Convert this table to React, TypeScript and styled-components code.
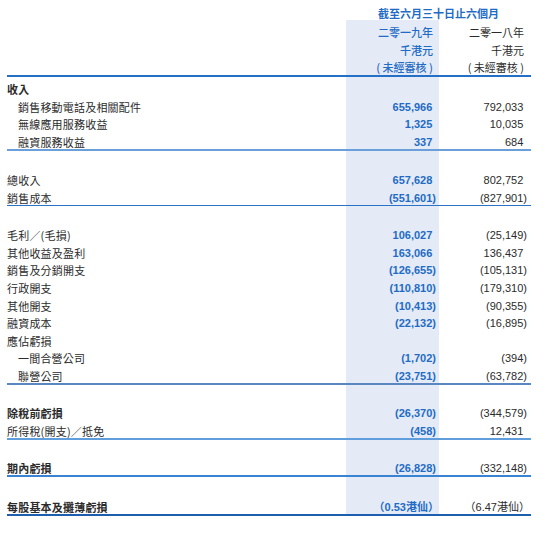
import React from "react";
import styled, { createGlobalStyle } from "styled-components";

const GlobalStyle = createGlobalStyle`
  html, body { margin: 0; padding: 0; background: #ffffff; }
  body { font-family: "Noto Sans CJK TC", "Liberation Sans", sans-serif; color: #2b2b2b; }
`;

const ROW = 17.6;
const BLUE = "#1f6bc5";
const SHADE = "#e5ebf6";
const CJK = `"Noto Sans CJK TC", "Noto Sans CJK SC", sans-serif`;
const NUM = `"Liberation Sans", Arial, "Noto Sans CJK TC", sans-serif`;

const Page = styled.div`
  padding-left: 7px;
  width: 524px;
`;

const Grid = styled.div`
  display: grid;
  grid-template-columns: 339px 93px 92px;
`;

const TitleBar = styled(Grid)`
  height: 20px;
  padding-top: 6px;
  box-sizing: border-box;
`;

const Title = styled.div`
  grid-column: 2 / 4;
  text-align: center;
  font-family: ${CJK};
  font-size: 11px;
  line-height: 14px;
  font-weight: 700;
  color: ${BLUE};
`;

const Table = styled.div`
  background: linear-gradient(
    90deg,
    transparent 339px,
    ${SHADE} 339px,
    ${SHADE} 432px,
    transparent 432px
  );
`;

const Head = styled.div`
  padding-top: 4px;
  border-bottom: 2px solid #2470c6;
`;

const HeadRow = styled(Grid)<{ $h: number }>`
  height: ${(p) => p.$h}px;
  line-height: ${(p) => p.$h}px;
`;

const HeadCell = styled.div<{ $current?: boolean }>`
  text-align: right;
  font-family: ${CJK};
  font-size: 11px;
  font-weight: ${(p) => (p.$current ? 500 : 400)};
  color: ${(p) => (p.$current ? BLUE : "#2b2b2b")};
  padding-right: ${(p) => (p.$current ? 6 : 7)}px;
  white-space: pre;
`;

const Group = styled.div<{ $pad: number; $bw: number; $bc: string }>`
  padding-top: ${(p) => p.$pad}px;
  border-bottom: ${(p) => p.$bw}px solid ${(p) => p.$bc};
`;

const Row = styled(Grid)`
  height: ${ROW}px;
  line-height: 13px;
  align-items: end;
`;

const Label = styled.div<{ $indent?: boolean; $bold?: boolean }>`
  font-family: ${CJK};
  font-size: 11px;
  letter-spacing: 0.2px;
  padding-left: ${(p) => (p.$indent ? 11 : 0)}px;
  font-weight: ${(p) => (p.$bold ? 700 : 400)};
  color: #2b2b2b;
  white-space: nowrap;
`;

const Value = styled.div<{ $current?: boolean; $pr: number }>`
  font-family: ${NUM};
  font-size: 11px;
  text-align: right;
  white-space: nowrap;
  font-weight: ${(p) => (p.$current ? 700 : 400)};
  color: ${(p) => (p.$current ? BLUE : "#2b2b2b")};
  padding-right: ${(p) => p.$pr}px;
`;

type Line = {
  label: string;
  a?: string;
  b?: string;
  indent?: boolean;
  bold?: boolean;
};

type Block = { pad: number; bw: number; bc: string; rows: Line[] };

const blocks: Block[] = [
  {
    pad: 1.7,
    bw: 2,
    bc: "#6b9fd9",
    rows: [
      { label: "收入", bold: true },
      { label: "銷售移動電話及相關配件", indent: true, a: "655,966", b: "792,033" },
      { label: "無線應用服務收益", indent: true, a: "1,325", b: "10,035" },
      { label: "融資服務收益", indent: true, a: "337", b: "684" },
    ],
  },
  {
    pad: 18.6,
    bw: 1,
    bc: "#2a72c6",
    rows: [
      { label: "總收入", a: "657,628", b: "802,752" },
      { label: "銷售成本", a: "(551,601)", b: "(827,901)" },
    ],
  },
  {
    pad: 18.8,
    bw: 2,
    bc: "#5a86c2",
    rows: [
      { label: "毛利／(毛損)", a: "106,027", b: "(25,149)" },
      { label: "其他收益及盈利", a: "163,066", b: "136,437" },
      { label: "銷售及分銷開支", a: "(126,655)", b: "(105,131)" },
      { label: "行政開支", a: "(110,810)", b: "(179,310)" },
      { label: "其他開支", a: "(10,413)", b: "(90,355)" },
      { label: "融資成本", a: "(22,132)", b: "(16,895)" },
      { label: "應佔虧損" },
      { label: "一間合營公司", indent: true, a: "(1,702)", b: "(394)" },
      { label: "聯營公司", indent: true, a: "(23,751)", b: "(63,782)" },
    ],
  },
  {
    pad: 17.6,
    bw: 2,
    bc: "#5f9ddc",
    rows: [
      { label: "除稅前虧損", bold: true, a: "(26,370)", b: "(344,579)" },
      { label: "所得稅(開支)／抵免", a: "(458)", b: "12,431" },
    ],
  },
  {
    pad: 17.8,
    bw: 2,
    bc: "#3a82d2",
    rows: [{ label: "期內虧損", bold: true, a: "(26,828)", b: "(332,148)" }],
  },
  {
    pad: 19.4,
    bw: 2,
    bc: "#1d5fae",
    rows: [
      { label: "每股基本及攤薄虧損", bold: true, a: "（0.53港仙）", b: "（6.47港仙）" },
    ],
  },
];

// right padding: base gap, plus the width of ")" for figures without a
// closing bracket, minus the built-in space of a full-width bracket.
const padFor = (base: number, v?: string) => {
  if (!v) return base;
  if (v.endsWith("）")) return base - 3;
  if (v.endsWith(")")) return base;
  return base + 3.7;
};

export default function App() {
  return (
    <>
      <GlobalStyle />
      <Page>
        <TitleBar>
          <Title>截至六月三十日止六個月</Title>
        </TitleBar>
        <Table>
          <Head>
            <HeadRow $h={17}>
              <div />
              <HeadCell $current>二零一九年</HeadCell>
              <HeadCell>二零一八年</HeadCell>
            </HeadRow>
            <HeadRow $h={19}>
              <div />
              <HeadCell $current>千港元</HeadCell>
              <HeadCell>千港元</HeadCell>
            </HeadRow>
            <HeadRow $h={15}>
              <div />
              <HeadCell $current>( 未經審核 )</HeadCell>
              <HeadCell>( 未經審核 )</HeadCell>
            </HeadRow>
          </Head>
          {blocks.map((g, gi) => (
            <Group key={gi} $pad={g.pad} $bw={g.bw} $bc={g.bc}>
              {g.rows.map((r, ri) => (
                <Row key={ri}>
                  <Label $indent={r.indent} $bold={r.bold}>
                    {r.label}
                  </Label>
                  <Value $current $pr={padFor(3, r.a)}>
                    {r.a ?? ""}
                  </Value>
                  <Value $pr={padFor(4, r.b)}>{r.b ?? ""}</Value>
                </Row>
              ))}
            </Group>
          ))}
        </Table>
      </Page>
    </>
  );
}
